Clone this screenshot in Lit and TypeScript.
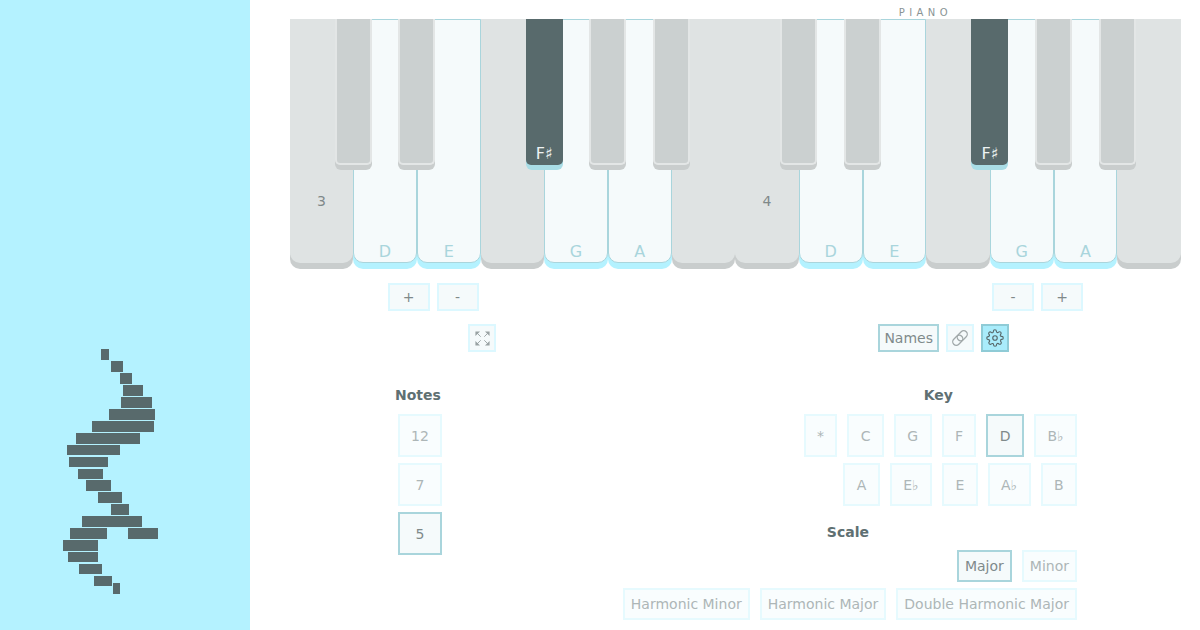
import { LitElement, html, css, svg } from "lit";
import { customElement } from "lit/decorators.js";

const KEY_W = 100 / 14;

// [x, y, w, h] of each rectangle in the note shape
const BARS = [
  [101, 349, 8, 11], [111, 361, 12, 11], [120, 373, 12, 11], [123, 385, 20, 11],
  [121, 397, 31, 11], [109, 409, 46, 11], [92, 421, 62, 11], [76, 433, 64, 11],
  [67, 445, 53, 10], [69, 457, 39, 10], [78, 469, 25, 10], [86, 480, 25, 11],
  [98, 492, 24, 11], [111, 504, 18, 11], [82, 516, 60, 11], [70, 528, 37, 11],
  [128, 528, 30, 11], [63, 540, 35, 11], [68, 552, 30, 10], [79, 564, 23, 10],
  [94, 576, 18, 10], [113, 583, 7, 11],
];

const OCTAVES = [3, 4];
const WHITE = ["C", "D", "E", "F", "G", "A", "B"];
const ACTIVE_WHITE = ["D", "E", "G", "A"];
const BLACK_SLOTS = [1, 2, 4, 5, 6];
const ACTIVE_SLOT = 4;

const gear = svg`<circle cx="12" cy="12" r="3"></circle><path d="M19.4 15a1.65 1.65 0 0 0 .33 1.82l.06.06a2 2 0 1 1-2.83 2.83l-.06-.06a1.65 1.65 0 0 0-2.82 1.17V21a2 2 0 1 1-4 0v-.09a1.65 1.65 0 0 0-2.82-1.11l-.06.06a2 2 0 1 1-2.83-2.83l.06-.06a1.65 1.65 0 0 0-1.17-2.82H3a2 2 0 1 1 0-4h.09A1.65 1.65 0 0 0 4.2 7.33l-.06-.06a2 2 0 1 1 2.83-2.83l.06.06A1.65 1.65 0 0 0 9.85 3.33V3a2 2 0 1 1 4 0v.09a1.65 1.65 0 0 0 2.82 1.17l.06-.06a2 2 0 1 1 2.83 2.83l-.06.06a1.65 1.65 0 0 0 1.17 2.82H21a2 2 0 1 1 0 4h-.09a1.65 1.65 0 0 0-1.51 1.09z"></path>`;
const chain = svg`<rect x="1.5" y="10.25" width="15" height="9.5" rx="4.75" transform="rotate(-45 9 15)"></rect><rect x="7.5" y="4.25" width="15" height="9.5" rx="4.75" transform="rotate(-45 15 9)"></rect>`;
const expand = svg`<path d="M4 4l5.5 5.5M20 4l-5.5 5.5M4 20l5.5-5.5M20 20l-5.5-5.5"></path><path class="head" d="M2 2h6.5L2 8.5zM22 2h-6.5L22 8.5zM2 22h6.5L2 15.5zM22 22h-6.5L22 15.5z"></path>`;

@customElement("app-root")
export class AppRoot extends LitElement {
  static styles = css`
    :host {
      display: flex;
      width: 1200px;
      height: 630px;
      overflow: hidden;
      background: #fff;
      font-family: "DejaVu Sans", sans-serif;
      font-size: 14px;
    }

    .sidebar {
      position: relative;
      flex: none;
      width: 250px;
      background: #b4f2ff;
    }

    .bar {
      position: absolute;
      background: #586a6c;
    }

    .main {
      flex: 1;
      padding: 0 19px 0 39.5px;
    }

    .title {
      height: 19px;
      padding-right: 229px;
      text-align: right;
      font-size: 10px;
      line-height: 25px;
      letter-spacing: 4.4px;
      color: #8a9394;
    }

    .piano {
      position: relative;
      display: flex;
      height: 250px;
    }

    .white {
      flex: 1;
      display: flex;
      border-radius: 0 0 10px 10px;
      padding-bottom: 6px;
      background: #c9cdcd;
    }

    .white .face {
      flex: 1;
      display: flex;
      flex-direction: column;
      align-items: center;
      border-radius: 0 0 10px 10px;
      background: #dfe3e3;
    }

    .white.on {
      background: #b4f2ff;
    }

    .white.on .face {
      border: 1px solid #a9d5dc;
      background: #f5fafb;
    }

    .octave {
      margin-top: 174px;
      line-height: 17px;
      color: #7f898a;
    }

    .name {
      margin-top: auto;
      padding-bottom: 1px;
      font-size: 16px;
      line-height: 19px;
      color: #a9d5dc;
    }

    .black {
      position: absolute;
      top: 0;
      width: 37px;
      height: 151px;
      margin-left: -18.5px;
      box-sizing: border-box;
      border-radius: 0 0 6px 6px;
      padding-bottom: 5px;
      background: #c9cdcd;
    }

    .black .face {
      box-sizing: border-box;
      height: 100%;
      border: 2px solid #e3e6e6;
      border-top: 0;
      border-radius: 0 0 5px 5px;
      background: #cbd0d0;
    }

    .black.on {
      background: #a9dde6;
    }

    .black.on .face {
      display: flex;
      align-items: flex-end;
      justify-content: center;
      border: 0;
      background: #586a6c;
      color: #eef3f3;
      font-size: 16px;
      line-height: 19px;
      padding-bottom: 2px;
    }

    button {
      box-sizing: border-box;
      margin: 0;
      padding: 0;
      border: 2px solid #dcf8ff;
      border-radius: 0;
      background: #f5fafb;
      color: #a7b1b2;
      font: inherit;
      white-space: nowrap;
    }

    .notes button,
    .key button,
    .scale button {
      border-color: #e6fafe;
      background: #f9fdfe;
      color: #adb6b7;
    }

    button.on,
    .notes button.on,
    .key button.on,
    .scale button.on {
      border-color: #a9d5dc;
      background: #f5fafb;
      color: #7f8a8b;
    }

    .row {
      display: flex;
      align-items: center;
      justify-content: space-between;
    }

    .group {
      display: flex;
      gap: 7px;
    }

    .octaves {
      margin-top: 14px;
      padding: 0 98px;
    }

    .tools {
      margin-top: 13px;
      padding: 0 172px 0 178.5px;
    }

    .ctl {
      width: 42px;
      height: 28px;
      color: #7f898a;
    }

    .icon {
      display: flex;
      align-items: center;
      justify-content: center;
      width: 28px;
      height: 28px;
    }

    .icon svg {
      width: 18px;
      height: 18px;
      fill: none;
      stroke: #a0a8a9;
      stroke-width: 1.7;
    }

    .icon.full svg {
      width: 17px;
      height: 17px;
      stroke: #99a2a3;
      stroke-width: 1.3;
    }

    .icon.full .head {
      fill: #99a2a3;
      stroke: none;
    }

    .icon.gear {
      border-color: #8fcbd6;
      background: #a9ecfb;
    }

    .icon.gear svg {
      stroke: #566769;
      stroke-width: 1.5;
    }

    .names {
      height: 28px;
      padding: 0 4px;
    }

    .panels {
      display: flex;
      align-items: flex-start;
      justify-content: space-between;
      margin-top: 35px;
      padding: 0 104px 0 105.5px;
    }

    .heading {
      height: 27px;
      padding-right: 4px;
      font-weight: 700;
      line-height: 17px;
      text-align: center;
      color: #5f7072;
    }

    .notes {
      display: flex;
      flex-direction: column;
      gap: 6px;
      width: 47px;
    }

    .notes .heading {
      height: 21px;
      padding-right: 0;
      text-align: left;
    }

    .notes button {
      align-self: flex-end;
      width: 44px;
      height: 43px;
    }

    .right {
      display: flex;
      flex-direction: column;
      align-items: flex-end;
    }

    .stack {
      display: flex;
      flex-direction: column;
      gap: 6px;
    }

    .line {
      display: flex;
      justify-content: flex-end;
      gap: 10px;
    }

    .key button {
      height: 43px;
      padding: 0 11.4px;
    }

    .scale {
      margin-top: 17px;
    }

    .scale .heading {
      line-height: 19px;
    }

    .scale button {
      height: 32px;
      padding: 0 6px;
    }
  `;

  private _white(octave: number, note: string) {
    const on = ACTIVE_WHITE.includes(note);
    return html`<div class="white ${on ? "on" : ""}">
      <div class="face">
        ${note === "C" ? html`<span class="octave">${octave}</span>` : ""}
        ${on ? html`<span class="name">${note}</span>` : ""}
      </div>
    </div>`;
  }

  private _black(octaveIndex: number, slot: number) {
    const on = slot === ACTIVE_SLOT;
    const left = (octaveIndex * 7 + slot) * KEY_W;
    return html`<div class="black ${on ? "on" : ""}" style="left:${left}%">
      <div class="face">${on ? "F♯" : ""}</div>
    </div>`;
  }

  private _buttons(items: string[], selected: string) {
    return items.map(
      (t) => html`<button class=${t === selected ? "on" : ""}>${t}</button>`
    );
  }

  render() {
    return html`
      <div class="sidebar">
        ${BARS.map(
          ([x, y, w, h]) =>
            html`<div
              class="bar"
              style="left:${x}px;top:${y}px;width:${w}px;height:${h}px"
            ></div>`
        )}
      </div>
      <div class="main">
        <div class="title">PIANO</div>
        <div class="piano">
          ${OCTAVES.map((o) => WHITE.map((n) => this._white(o, n)))}
          ${OCTAVES.map((_, i) => BLACK_SLOTS.map((s) => this._black(i, s)))}
        </div>
        <div class="row octaves">
          <div class="group">
            <button class="ctl">+</button>
            <button class="ctl">-</button>
          </div>
          <div class="group">
            <button class="ctl">-</button>
            <button class="ctl">+</button>
          </div>
        </div>
        <div class="row tools">
          <button class="icon full"><svg viewBox="0 0 24 24">${expand}</svg></button>
          <div class="group">
            <button class="on names">Names</button>
            <button class="icon"><svg viewBox="0 0 24 24">${chain}</svg></button>
            <button class="icon gear"><svg viewBox="0 0 24 24">${gear}</svg></button>
          </div>
        </div>
        <div class="panels">
          <div class="notes">
            <div class="heading">Notes</div>
            ${this._buttons(["12", "7", "5"], "5")}
          </div>
          <div class="right">
            <div class="key">
              <div class="heading">Key</div>
              <div class="stack">
                <div class="line">
                  ${this._buttons(["*", "C", "G", "F", "D", "B♭"], "D")}
                </div>
                <div class="line">
                  ${this._buttons(["A", "E♭", "E", "A♭", "B"], "")}
                </div>
              </div>
            </div>
            <div class="scale">
              <div class="heading">Scale</div>
              <div class="stack">
                <div class="line">
                  ${this._buttons(["Major", "Minor"], "Major")}
                </div>
                <div class="line">
                  ${this._buttons(
                    ["Harmonic Minor", "Harmonic Major", "Double Harmonic Major"],
                    ""
                  )}
                </div>
              </div>
            </div>
          </div>
        </div>
      </div>
    `;
  }
}
